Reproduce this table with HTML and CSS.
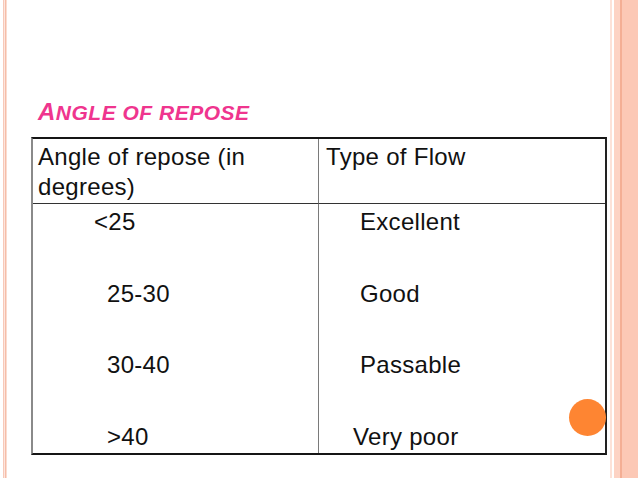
FILE: index.html
```html
<!DOCTYPE html>
<html>
<head>
<meta charset="utf-8">
<link rel="stylesheet" href="styles.css">
</head>
<body>
<div class="slide">
  <div class="content">
    <h1 class="title"><span class="big">A</span><span class="small">NGLE OF REPOSE</span></h1>
    <div class="grid">
      <div class="cell head left">Angle of repose (in degrees)</div>
      <div class="cell head right">Type of Flow</div>
      <div class="cell body left">
        <div class="item in-a">&lt;25</div>
        <div class="item in-b">25-30</div>
        <div class="item in-b">30-40</div>
        <div class="item in-b">&gt;40</div>
      </div>
      <div class="cell body right">
        <div class="item in-c">Excellent</div>
        <div class="item in-c">Good</div>
        <div class="item in-c">Passable</div>
        <div class="item in-d">Very poor</div>
      </div>
    </div>
  </div>
  <div class="dot"></div>
</div>
</body>
</html>
```

FILE: styles.css
```css
html, body {
  margin: 0;
  padding: 0;
  background: #fff;
}

.slide {
  position: relative;
  width: 638px;
  height: 478px;
  overflow: hidden;
  font-family: "Liberation Sans", Arial, sans-serif;
  color: #111;
  background: linear-gradient(to right,
    #fff 0 3px,
    #f7c9b9 3px 4px,
    #fde6de 4px 5px,
    #f5bda9 5px 6px,
    #fbdcd0 6px 7px,
    #fff 7px 610px,
    #fde2d8 610px 612px,
    #fff 612px 614px,
    #fdd3c4 614px 620px,
    #f4ae94 620px 622px,
    #fcc8b5 622px 638px);
}

.content {
  padding: 94px 31px 0 31px;
}

.title {
  margin: 0 0 13px 0;
  padding-left: 7px;
  height: 30px;
  line-height: 30px;
  font-weight: bold;
  font-style: italic;
  color: #ef358e;
  letter-spacing: 0.5px;
  white-space: nowrap;
}

.title .big {
  font-size: 24px;
}

.title .small {
  font-size: 21px;
}

.grid {
  display: grid;
  grid-template-columns: 286px 286px;
  border-top: 2px solid #151515;
  border-bottom: 2px solid #151515;
  border-left: 2px solid #8a8a8a;
  border-right: 2px solid #222;
}

.cell {
  font-size: 24px;
  line-height: 30px;
  letter-spacing: 0.3px;
}

.cell.left {
  border-right: 1px solid #7a7a7a;
}

.cell.head {
  border-bottom: 1px solid #333;
  padding: 3px 6px 0 5px;
  height: 61px;
}

.cell.head.right {
  padding-left: 7px;
}

.cell.body {
  padding-top: 3px;
  height: 246px;
}

.item + .item {
  margin-top: 41.7px;
}

.in-a { padding-left: 61px; }
.in-b { padding-left: 74px; }
.in-c { padding-left: 41px; }
.in-d { padding-left: 34px; }

.dot {
  position: absolute;
  left: 568.5px;
  top: 398.5px;
  width: 37px;
  height: 37px;
  border-radius: 50%;
  background: #fe8532;
}
```
